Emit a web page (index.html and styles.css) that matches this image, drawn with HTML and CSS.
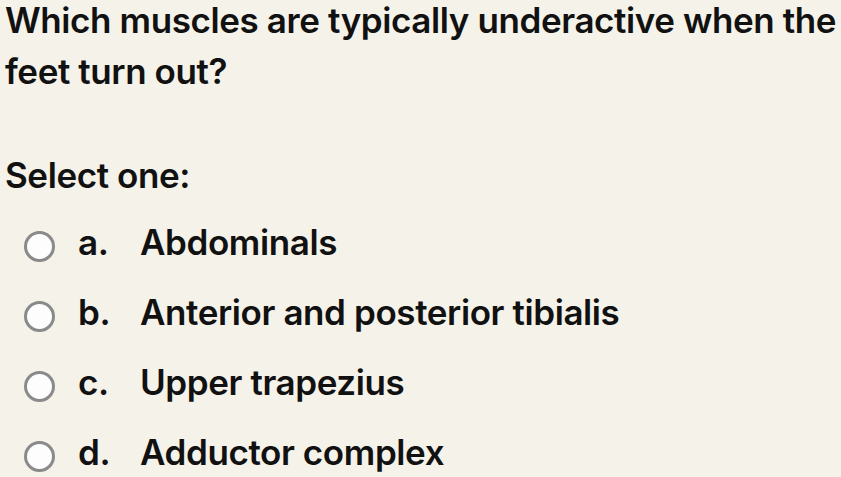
FILE: index.html
```html
<!DOCTYPE html>
<html>
<head>
<meta charset="utf-8">
<link rel="stylesheet" href="styles.css">
</head>
<body>
<div class="page">
  <p class="question">Which muscles are typically underactive when the<br>feet turn out?</p>
  <p class="prompt">Select one:</p>
  <div class="options">
    <label class="option"><span class="radio"></span><span class="letter">a.</span><span class="text">Abdominals</span></label>
    <label class="option"><span class="radio"></span><span class="letter">b.</span><span class="text">Anterior and posterior tibialis</span></label>
    <label class="option"><span class="radio"></span><span class="letter">c.</span><span class="text">Upper trapezius</span></label>
    <label class="option"><span class="radio"></span><span class="letter">d.</span><span class="text">Adductor complex</span></label>
  </div>
</div>
</body>
</html>
```

FILE: styles.css
```css
html, body {
  margin: 0;
  padding: 0;
  background: #f5f2e9;
  overflow: hidden;
}
.page {
  padding-left: 5px;
  font-family: Inter, "Liberation Sans", sans-serif;
  font-weight: 600;
  font-size: 35px;
  letter-spacing: -0.4px;
  color: #111111;
  line-height: 51px;
}
.question {
  margin: -5px 0 0 0;
  white-space: nowrap;
}
.prompt {
  margin: 53px 0 0 0;
}
.options {
  margin-top: 6px;
  display: flex;
  flex-direction: column;
}
.option {
  display: flex;
  align-items: center;
  height: 70px;
}
.radio {
  box-sizing: border-box;
  width: 31px;
  height: 31px;
  border-radius: 50%;
  border: 3px solid #8a8a8a;
  background: #fdfdfd;
  margin-left: 19px;
  margin-top: 8px;
  flex: none;
}
.letter {
  margin-left: 23px;
  width: 62px;
}
```
